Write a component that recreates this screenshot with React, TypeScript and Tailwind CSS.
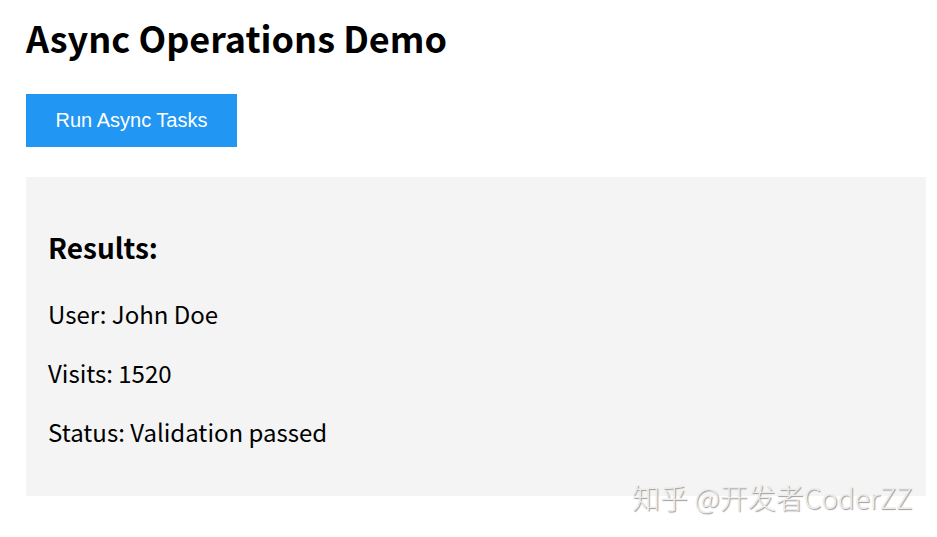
import React from 'react';

const App: React.FC = () => {
  return (
    <div className="relative h-[537px] w-[937px] overflow-hidden bg-white px-[26px] pt-[14px] text-black" style={{ fontFamily: '"Noto Sans CJK SC", "Noto Sans", sans-serif' }}>
      <h1 className="text-[36px] font-bold leading-[46px]">Async Operations Demo</h1>
      <button className="mt-[34px] h-[53px] w-[211px] bg-[#2196f3] pb-[2px] text-[20px] text-white" style={{ fontFamily: '"Liberation Sans", Arial, sans-serif' }}>
        Run Async Tasks
      </button>
      <div className="mt-[30px] h-[319px] w-[900px] bg-[#f4f4f4] px-[22px] pt-[50px]">
        <h2 className="text-[28px] font-bold leading-[40px]">Results:</h2>
        <div className="mt-[29px] flex flex-col gap-[23px] text-[24px] leading-[36px]">
          <p>User: John Doe</p>
          <p>Visits: 1520</p>
          <p>Status: Validation passed</p>
        </div>
      </div>
      <div className="absolute left-[632px] top-[476px] text-[28px] font-light text-[#ececec] [text-shadow:1px_1px_1px_#9a9a9a]">
        知乎 @开发者CoderZZ
      </div>
    </div>
  );
};

export default App;
